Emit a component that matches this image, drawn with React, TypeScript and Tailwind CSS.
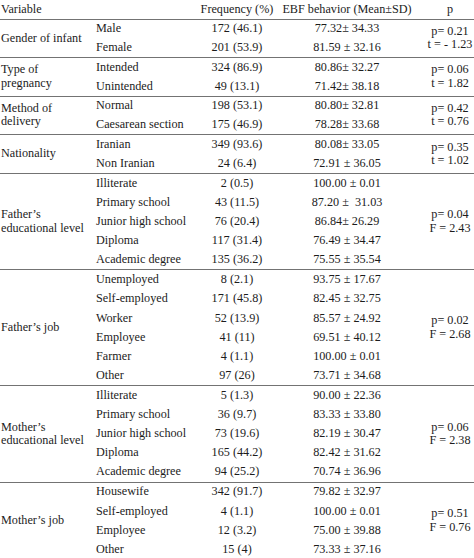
import React from 'react'

type Row = [string, string, string]

type Section = {
  label: string[]
  rows: Row[]
  stats: string[]
}

const sections: Section[] = [
  {
    label: ['Gender of infant'],
    rows: [
      ['Male', '172 (46.1)', '77.32± 34.33'],
      ['Female', '201 (53.9)', '81.59 ± 32.16'],
    ],
    stats: ['p= 0.21', 't = - 1.23'],
  },
  {
    label: ['Type of', 'pregnancy'],
    rows: [
      ['Intended', '324 (86.9)', '80.86± 32.27'],
      ['Unintended', '49 (13.1)', '71.42± 38.18'],
    ],
    stats: ['p= 0.06', 't = 1.82'],
  },
  {
    label: ['Method of', 'delivery'],
    rows: [
      ['Normal', '198 (53.1)', '80.80± 32.81'],
      ['Caesarean section', '175 (46.9)', '78.28± 33.68'],
    ],
    stats: ['p= 0.42', 't = 0.76'],
  },
  {
    label: ['Nationality'],
    rows: [
      ['Iranian', '349 (93.6)', '80.08± 33.05'],
      ['Non Iranian', '24 (6.4)', '72.91 ± 36.05'],
    ],
    stats: ['p= 0.35', 't = 1.02'],
  },
  {
    label: ['Father’s', 'educational level'],
    rows: [
      ['Illiterate', '2 (0.5)', '100.00 ± 0.01'],
      ['Primary school', '43 (11.5)', '87.20 ±  31.03'],
      ['Junior high school', '76 (20.4)', '86.84± 26.29'],
      ['Diploma', '117 (31.4)', '76.49 ± 34.47'],
      ['Academic degree', '135 (36.2)', '75.55 ± 35.54'],
    ],
    stats: ['p= 0.04', 'F = 2.43'],
  },
  {
    label: ['Father’s job'],
    rows: [
      ['Unemployed', '8 (2.1)', '93.75 ± 17.67'],
      ['Self-employed', '171 (45.8)', '82.45 ± 32.75'],
      ['Worker', '52 (13.9)', '85.57 ± 24.92'],
      ['Employee', '41 (11)', '69.51 ± 40.12'],
      ['Farmer', '4 (1.1)', '100.00 ± 0.01'],
      ['Other', '97 (26)', '73.71 ± 34.68'],
    ],
    stats: ['p= 0.02', 'F = 2.68'],
  },
  {
    label: ['Mother’s', 'educational level'],
    rows: [
      ['Illiterate', '5 (1.3)', '90.00 ± 22.36'],
      ['Primary school', '36 (9.7)', '83.33 ± 33.80'],
      ['Junior high school', '73 (19.6)', '82.19 ± 30.47'],
      ['Diploma', '165 (44.2)', '82.42 ± 31.62'],
      ['Academic degree', '94 (25.2)', '70.74 ± 36.96'],
    ],
    stats: ['p= 0.06', 'F = 2.38'],
  },
  {
    label: ['Mother’s job'],
    rows: [
      ['Housewife', '342 (91.7)', '79.82 ± 32.97'],
      ['Self-employed', '4 (1.1)', '100.00 ± 0.01'],
      ['Employee', '12 (3.2)', '75.00 ± 39.88'],
      ['Other', '15 (4)', '73.33 ± 37.16'],
    ],
    stats: ['p= 0.51', 'F = 0.76'],
  },
]

const ROW = 19.3

export default function App() {
  return (
    <div
      className="w-[474px] h-[558px] overflow-hidden bg-white text-[#1c1c1c] text-[12.2px] leading-[13.4px]"
      style={{ fontFamily: '"Liberation Serif", "Times New Roman", serif' }}
    >
      {/* header */}
      <div className="flex items-center w-[480px] h-[19.5px] border-b-[1.5px] border-[#737373] whitespace-nowrap">
        <div className="w-[200px] pl-px">Variable</div>
        <div className="w-[74px] flex justify-center">Frequency (%)</div>
        <div className="w-[146px] flex justify-center">EBF behavior (Mean±SD)</div>
        <div className="w-[60px] flex justify-center">p</div>
      </div>

      {sections.map((s, i) => (
        <div
          key={i}
          className="flex w-[480px] border-b-[1.5px] border-[#737373]"
          style={{ height: s.rows.length * ROW }}
        >
          <div className="w-[96px] flex flex-col justify-center pl-px">
            {s.label.map((l) => (
              <span key={l} className="whitespace-nowrap">
                {l}
              </span>
            ))}
          </div>
          <div className="w-[324px] flex flex-col">
            {s.rows.map(([cat, freq, ebf]) => (
              <div key={cat} className="flex-1 flex items-center whitespace-pre">
                <div className="w-[104px]">{cat}</div>
                <div className="w-[74px] flex justify-center">{freq}</div>
                <div className="w-[146px] flex justify-center">{ebf}</div>
              </div>
            ))}
          </div>
          <div className="w-[60px] flex flex-col justify-center items-center whitespace-nowrap">
            {s.stats.map((t) => (
              <span key={t}>{t}</span>
            ))}
          </div>
        </div>
      ))}
    </div>
  )
}
